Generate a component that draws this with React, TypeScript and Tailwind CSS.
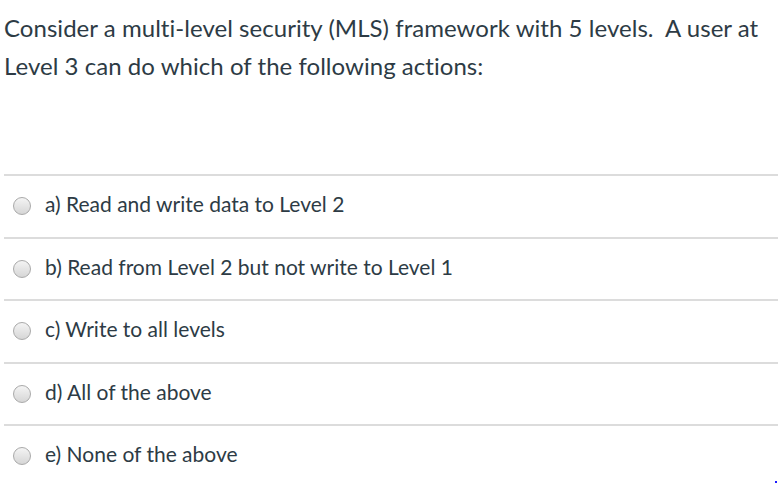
const options = [
  "a) Read and write data to Level 2",
  "b) Read from Level 2 but not write to Level 1",
  "c) Write to all levels",
  "d) All of the above",
  "e) None of the above",
];

const Radio = () => (
  <span className="block w-[18px] h-[18px] shrink-0 rounded-full border border-[#a9a9a9] bg-gradient-to-b from-[#f4f4f4] to-[#d6d6d6]" />
);

export default function App() {
  return (
    <div className="w-[778px] h-[484px] bg-white overflow-hidden relative text-[#2d3b45] font-['Lato',sans-serif]">
      <p className="pl-[4px] pt-[9px] text-[24px] leading-[37.5px] tracking-[0.04px]">
        Consider a multi-level security (MLS) framework with 5 levels.&nbsp; A user at Level 3 can do which of the following actions:
      </p>
      <ul className="mt-[90px] ml-[4px]">
        {options.map((o) => (
          <li key={o} className="flex items-center h-[62.5px] border-t-2 border-[#dcdcdc] pl-[9px] gap-[14px]">
            <Radio />
            <span className="text-[21px] -mt-[5px]">{o}</span>
          </li>
        ))}
      </ul>
      <span className="absolute left-[775px] top-[481px] w-[2px] h-[2px] bg-[#1a1aff]" />
    </div>
  );
}
